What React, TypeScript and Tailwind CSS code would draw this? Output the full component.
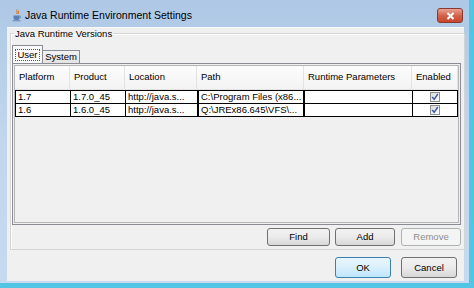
import React from "react";

function JavaIcon() {
  return (
    <svg width="10" height="13" viewBox="0 0 10 13">
      <path d="M5 0.5 C3.5 2 6.5 3 4.5 5 M6.5 1.5 C5.5 2.6 7.5 3.3 6 5" stroke="#e0701a" strokeWidth="1" fill="none" />
      <path d="M1.5 6.5 H7.5 V9 C7.5 10.5 6.3 11 4.5 11 C2.7 11 1.5 10.5 1.5 9 Z" fill="#5b7fb3" />
      <path d="M7.5 7 C9.2 7 9.2 9 7.3 9.2" stroke="#5b7fb3" strokeWidth="0.9" fill="none" />
      <path d="M0.5 11.8 H8.5" stroke="#5b7fb3" strokeWidth="0.9" />
    </svg>
  );
}

function CheckBox() {
  return (
    <div className="w-[10px] h-[10px] border border-[#8f8f8f] bg-gradient-to-br from-[#d8d8d8] to-white flex items-center justify-center">
      <svg width="8" height="8" viewBox="0 0 8 8">
        <path d="M1.2 4 L3.2 6.3 L6.8 1" stroke="#3c5ea8" strokeWidth="1.5" fill="none" />
      </svg>
    </div>
  );
}

function Btn({ label, w, h, kind }: { label: string; w: string; h: string; kind?: "default" | "disabled" }) {
  let cls =
    "border-[#707070] bg-gradient-to-b from-[#f2f2f2] via-[#ebebeb] to-[#d7d7d7] text-black";
  if (kind === "default")
    cls = "border-[#3c7fb1] bg-gradient-to-b from-[#eaf6fd] via-[#d9f0fc] to-[#bee6fd] text-black";
  if (kind === "disabled") cls = "border-[#adb2b5] bg-[#f4f4f4] text-[#8d8d8d]";
  return (
    <div className={`${w} ${h} ${cls} border rounded-[3px] flex items-center justify-center text-[9.5px] leading-none`}>
      {label}
    </div>
  );
}

const cols = "grid grid-cols-[55px_55px_72px_107px_108px_46px]";

function Row({ first, p, prod, path }: { first?: boolean; p: string; prod: string; path: string }) {
  return (
    <div className={`${cols} border-b border-black ${first ? "border-t h-[14px]" : "h-[13px]"} bg-white`}>
      <div className="border-l border-black pl-[2px] leading-[12px] whitespace-nowrap overflow-hidden">{p}</div>
      <div className="border-l border-black pl-[2px] leading-[12px] whitespace-nowrap overflow-hidden">{prod}</div>
      <div className="border-l border-black pl-[2px] leading-[12px] whitespace-nowrap overflow-hidden">http://java.s...</div>
      <div className="border-l-2 border-r border-black pl-[2px] leading-[12px] whitespace-nowrap overflow-hidden">{path}</div>
      <div className="border-l border-black"></div>
      <div className="border-l border-r border-black flex items-center justify-center">
        <CheckBox />
      </div>
    </div>
  );
}

export default function App() {
  return (
    <div className="w-[474px] h-[288px] bg-[#52c5e5] overflow-hidden font-['Liberation_Sans',Arial,sans-serif] text-black">
      <div className="w-[469px] h-[283px] bg-gradient-to-b from-[#aec8e5] via-[#c2d7ee] to-[#c5d9ef] flex flex-col">
        {/* title bar */}
        <div className="h-[27px] flex items-start pl-[12px] shrink-0">
          <div className="mt-[9px]">
            <JavaIcon />
          </div>
          <div className="ml-[3px] mt-[9px] text-[10.5px] leading-[13px]">Java Runtime Environment Settings</div>
          <div className="flex-1" />
          <div className="mt-[8px] mr-[6px] w-[26px] h-[15px] rounded-[3px] border border-[#8a3a2c] bg-gradient-to-b from-[#e8a293] via-[#d2634c] to-[#c8452c] flex items-center justify-center">
            <svg width="9" height="8" viewBox="0 0 9 8">
              <path d="M1.5 1 L7.5 7 M7.5 1 L1.5 7" stroke="white" strokeWidth="2" />
            </svg>
          </div>
        </div>
        {/* content */}
        <div className="ml-[7px] mr-[5px] mb-[2px] flex-1 bg-[#f0f0f0] border-t border-[#f8f8f8] flex flex-col text-[9.5px]">
          <fieldset className="ml-[3px] mr-[1px] h-[222px] border border-[#d5d5d5] shadow-[inset_1px_1px_0_#ffffff] flex flex-col">
            <legend className="ml-[3px] px-[1px] text-[9.5px] leading-[11px]">Java Runtime Versions</legend>
            {/* tabs */}
            <div className="mt-[6px] ml-[1px] flex items-end h-[18px]">
              <div className="w-[31px] h-[18px] border border-b-0 border-[#898c95] bg-[#fafafa] flex items-center justify-center">
                <span className="border border-dotted border-[#555] px-[1px] leading-[10px]">User</span>
              </div>
              <div className="w-[37px] h-[13px] border border-l-0 border-b-0 border-[#898c95] bg-gradient-to-b from-[#f2f2f2] to-[#e3e3e3] flex items-center justify-center leading-none">
                System
              </div>
            </div>
            <div className="ml-[1px] mr-[3px] h-[162px] border border-[#898c95] p-[1px] bg-[#f0f0f0]">
              <div className="h-full border border-[#b5b5b5] bg-[#f0f0f0]">
                <div className={`${cols} h-[24px] bg-gradient-to-b from-[#fcfcfc] to-[#f3f3f3] border-b border-[#e3e3e3]`}>
                  {["Platform", "Product", "Location", "Path", "Runtime Parameters", "Enabled"].map((h) => (
                    <div key={h} className="border-r border-[#e2e2e2] pl-[4px] flex items-center whitespace-nowrap">
                      {h}
                    </div>
                  ))}
                </div>
                <Row first p="1.7" prod="1.7.0_45" path="C:\Program Files (x86..." />
                <Row p="1.6" prod="1.6.0_45" path="Q:\JREx86.645\VFS\..." />
              </div>
            </div>
            <div className="mt-[3px] flex justify-end pr-[3px]">
              <Btn label="Find" w="w-[63px]" h="h-[18px]" />
              <div className="w-[5px]" />
              <Btn label="Add" w="w-[60px]" h="h-[18px]" />
              <div className="w-[6px]" />
              <Btn label="Remove" w="w-[60px]" h="h-[18px]" kind="disabled" />
            </div>
          </fieldset>
          <div className="mt-[7px] flex justify-end pr-[7px]">
            <Btn label="OK" w="w-[56px]" h="h-[21px]" kind="default" />
            <div className="w-[10px]" />
            <Btn label="Cancel" w="w-[56px]" h="h-[21px]" />
          </div>
        </div>
      </div>
    </div>
  );
}
